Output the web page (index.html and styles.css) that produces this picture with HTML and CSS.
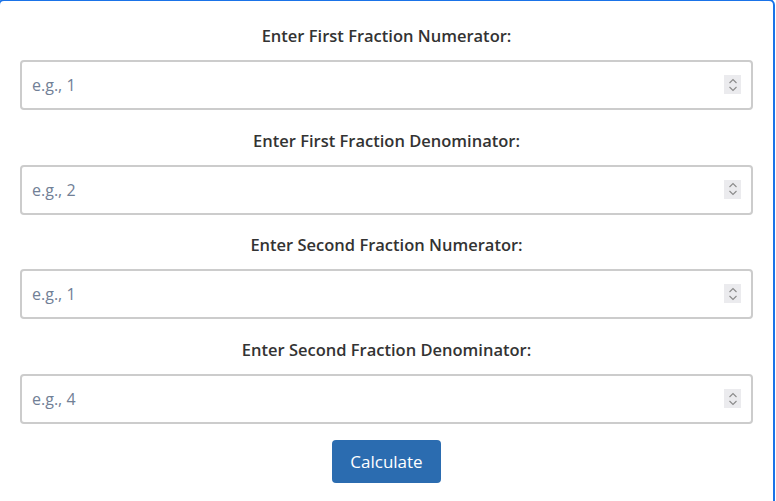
FILE: index.html
```html
<!DOCTYPE html>
<html lang="en">
<head>
  <meta charset="UTF-8">
  <meta name="viewport" content="width=device-width, initial-scale=1.0">
  <title>Fraction Calculator</title>
  <link rel="stylesheet" href="styles.css">
</head>
<body>
<div class="container">
  <form id="fraction-form">
    <div class="field">
      <label for="num1">Enter First Fraction Numerator:</label>
      <div class="input-wrap">
        <input type="number" id="num1" placeholder="e.g., 1">
        <span class="spinner"><svg width="10" height="14" viewBox="0 0 10 14"><path d="M1.5 5 L5 1.5 L8.5 5 M1.5 9 L5 12.5 L8.5 9" fill="none" stroke="#8a8a8a" stroke-width="1.1"/></svg></span>
      </div>
    </div>
    <div class="field">
      <label for="den1">Enter First Fraction Denominator:</label>
      <div class="input-wrap">
        <input type="number" id="den1" placeholder="e.g., 2">
        <span class="spinner"><svg width="10" height="14" viewBox="0 0 10 14"><path d="M1.5 5 L5 1.5 L8.5 5 M1.5 9 L5 12.5 L8.5 9" fill="none" stroke="#8a8a8a" stroke-width="1.1"/></svg></span>
      </div>
    </div>
    <div class="field">
      <label for="num2">Enter Second Fraction Numerator:</label>
      <div class="input-wrap">
        <input type="number" id="num2" placeholder="e.g., 1">
        <span class="spinner"><svg width="10" height="14" viewBox="0 0 10 14"><path d="M1.5 5 L5 1.5 L8.5 5 M1.5 9 L5 12.5 L8.5 9" fill="none" stroke="#8a8a8a" stroke-width="1.1"/></svg></span>
      </div>
    </div>
    <div class="field">
      <label for="den2">Enter Second Fraction Denominator:</label>
      <div class="input-wrap">
        <input type="number" id="den2" placeholder="e.g., 4">
        <span class="spinner"><svg width="10" height="14" viewBox="0 0 10 14"><path d="M1.5 5 L5 1.5 L8.5 5 M1.5 9 L5 12.5 L8.5 9" fill="none" stroke="#8a8a8a" stroke-width="1.1"/></svg></span>
      </div>
    </div>
    <div class="actions">
      <button type="submit">Calculate</button>
    </div>
  </form>
</div>
</body>
</html>
```

FILE: styles.css
```css
body {
  font-family: 'Open Sans', 'Noto Sans', sans-serif;
  background-color: #fff;
  margin: 0;
  padding: 0;
  overflow: hidden;
}

.container {
  background: #fff;
  border: 2px solid #1a73e8;
  border-radius: 6px;
  margin: -1px 0 0 -2px;
  padding: 23px 20px 40px 20px;
  box-sizing: border-box;
  width: 777px;
}

.field {
  margin-bottom: 18.7px;
}

label {
  display: block;
  text-align: center;
  font-size: 16.5px;
  font-weight: 600;
  line-height: 24px;
  color: #333;
  margin-bottom: 12px;
}

.input-wrap {
  position: relative;
}

input[type="number"] {
  display: block;
  width: 100%;
  height: 50px;
  box-sizing: border-box;
  padding: 0 10px;
  border: 2px solid #cccccc;
  border-radius: 4px;
  font-family: inherit;
  font-size: 16px;
  color: #333;
  -moz-appearance: textfield;
}

input[type="number"]::-webkit-inner-spin-button,
input[type="number"]::-webkit-outer-spin-button {
  -webkit-appearance: none;
  margin: 0;
}

input::placeholder {
  color: #718096;
}

.spinner {
  position: absolute;
  right: 12px;
  top: 15px;
  width: 17px;
  height: 19px;
  background: #ebebee;
  display: flex;
  align-items: center;
  justify-content: center;
}

.actions {
  display: flex;
  justify-content: center;
  margin-top: -3px;
}

button {
  width: 109px;
  height: 43px;
  background: #2b6cb0;
  border: none;
  border-radius: 4px;
  color: #fff;
  font-family: inherit;
  font-size: 17px;
  cursor: pointer;
}

button:hover {
  background: #245a94;
}
```
